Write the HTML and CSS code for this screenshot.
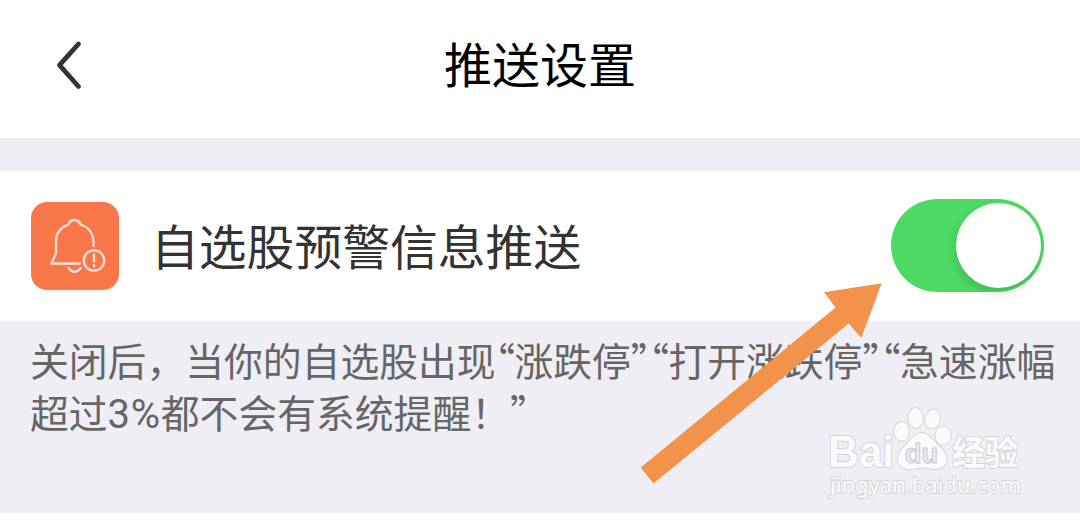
FILE: index.html
```html
<!DOCTYPE html>
<html lang="zh-CN">
<head>
<meta charset="utf-8">
<title>推送设置</title>
<link rel="stylesheet" href="styles.css">
</head>
<body>
<main class="screen">
  <header class="navbar">
    <svg class="back" viewBox="0 0 40 60" aria-label="返回"><path d="M28.5 9 9.5 30.2 28.5 51.5"/></svg>
    <h1 class="title">推送设置</h1>
  </header>
  <section class="setting">
    <svg class="bell" viewBox="0 0 88 88">
      <rect width="88" height="88" rx="16"/>
      <g class="bell-lines">
        <path d="M62.5 44V38Q61 26 49.5 22.5Q48 18 43.5 18Q39 18 37.5 22.5Q25 27 25 39V51L20.5 61.5H49"/>
        <path d="M37.5 66Q43.5 73.5 50 66"/>
        <circle cx="63" cy="58.5" r="10.2"/>
        <path d="M63 52.5V59.5M63 63V64.5"/>
      </g>
    </svg>
    <span class="label">自选股预警信息推送</span>
    <span class="switch"><span class="knob"></span></span>
  </section>
  <p class="note">关闭后，当你的自选股出现<span class="q">“</span>涨跌停<span class="q">”</span><span class="q">“</span>打开涨跌停<span class="q">”</span><span class="q">“</span>急速涨幅<br>超过<span class="latin">3%</span>都不会有系统提醒！<span class="q">”</span></p>
  <svg class="arrow" viewBox="0 0 260 220"><path d="M241.7 13.2 184 22.3 195.5 37.5 0.8 197.5 13.5 213.5 208.7 53.6 221.3 68Z" transform="translate(0 -10)"/></svg>
  <svg class="watermark" viewBox="0 0 240 123">
    <g class="mark">
      <text class="brand" x="18" y="77" textLength="66" lengthAdjust="spacingAndGlyphs">Bai</text>
      <ellipse cx="91.5" cy="41.5" rx="7.3" ry="9.5"/>
      <ellipse cx="105.5" cy="28" rx="7.2" ry="10"/>
      <ellipse cx="122.7" cy="29" rx="7.2" ry="9.5" transform="rotate(12 122.7 29)"/>
      <ellipse cx="133" cy="45.5" rx="7.5" ry="9.2"/>
      <path d="M111 43C119 43 122 50 130 57C142 68 136 80 123 79Q112 76 101 79C86 80 84 67 94 57C101 50 104 43 111 43Z"/>
      <text class="brand cjk" x="142" y="75" textLength="66" lengthAdjust="spacingAndGlyphs">经验</text>
    </g>
    <text class="du" x="95" y="73" textLength="33" lengthAdjust="spacingAndGlyphs">du</text>
    <text class="url" x="20" y="103" textLength="191" lengthAdjust="spacingAndGlyphs">jingyan.baidu.com</text>
  </svg>
</main>
</body>
</html>
```
FILE: styles.css
```css
* { box-sizing: border-box; }
body { margin: 0; font-family: "Noto Sans CJK SC", sans-serif; }
.screen { position: relative; width: 1080px; height: 523px; overflow: hidden; background: #efeef4; border-bottom: 10px solid #fff; }
.navbar { display: grid; grid-template-columns: 120px 1fr 120px; align-items: center; height: 138px; padding-bottom: 8px; background: #fff; }
.back { width: 40px; height: 60px; margin-left: 50px; fill: none; stroke: #333; stroke-width: 4.8; stroke-linecap: round; stroke-linejoin: round; }
.title { margin: 0; padding-bottom: 6px; text-align: center; font-size: 48px; font-weight: 400; line-height: 70px; color: #000; }
.setting { display: flex; align-items: center; height: 150px; margin-top: 33px; padding: 0 36px 0 31px; background: #fff; }
.bell { width: 88px; height: 88px; fill: #fa774b; }
.bell-lines { fill: none; stroke: #ffe1d2; stroke-width: 2.3; stroke-linejoin: round; stroke-linecap: round; }
.label { margin-left: 32px; padding-bottom: 2px; font-size: 47.8px; line-height: 70px; color: #333; }
.switch { display: flex; justify-content: flex-end; width: 153px; height: 93px; margin: 0 0 1px auto; padding: 4px 3px; border-radius: 47px; background: #4cd964; }
.knob { width: 85px; height: 85px; border-radius: 50%; background: #fff; box-shadow: -1px 5px 8px rgba(0,0,0,.13); }
.note { margin: 0; padding: 12px 0 0 30px; font-size: 38.8px; line-height: 52px; color: #666; white-space: nowrap; }
.q { font-feature-settings: "halt"; letter-spacing: -0.6px; }
.latin { font-family: Roboto, sans-serif; font-size: 40px; line-height: 1; letter-spacing: 0.7px; }
.arrow { position: absolute; left: 640px; top: 280px; width: 260px; height: 220px; fill: #f3924a; }
.watermark { position: absolute; left: 810px; top: 390px; width: 240px; height: 123px; }
.mark, .url { fill: #fbfbfd; stroke: #d3d3d8; stroke-width: 1.8; paint-order: stroke; }
.brand { font: 700 45px "Liberation Sans", sans-serif; }
.cjk { font: 700 34px "Noto Sans CJK SC", sans-serif; }
.du { font: 700 27px "Liberation Sans", sans-serif; fill: #ececf0; stroke: #c6c6ca; stroke-width: 1; }
.url { font: 400 22px "Noto Sans", sans-serif; }
```
